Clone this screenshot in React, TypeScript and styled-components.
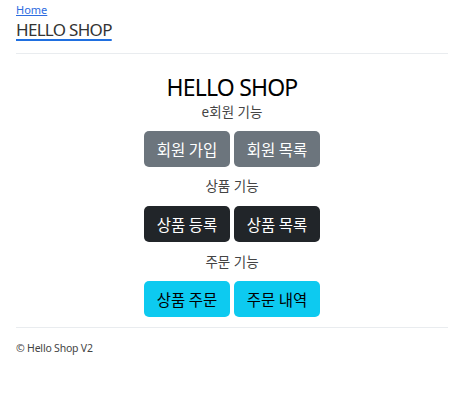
import React from "react";
import styled, { createGlobalStyle } from "styled-components";

const Global = createGlobalStyle`
  html, body { margin: 0; padding: 0; background: #fff; }
  body { font-family: "Noto Sans", "Noto Sans CJK KR", sans-serif; color: #212529; }
`;

const Page = styled.div`
  padding: 3px 26px 0 16px;
`;

const Header = styled.header`
  display: flex;
  flex-direction: column;
  align-items: flex-start;
  padding-bottom: 11px;
  border-bottom: 1px solid #e9ecef;
`;

const SmallLink = styled.a`
  font-size: 11px;
  line-height: 14px;
  color: #2d6cdf;
  text-decoration: underline;
`;

const TitleLink = styled.a`
  font-size: 17px;
  line-height: 25px;
  letter-spacing: -0.7px;
  color: #333;
  text-decoration: underline solid #1f6fe0 1.5px;
  text-underline-offset: 3px;
`;

const Main = styled.main`
  display: flex;
  flex-direction: column;
  align-items: center;
  padding-top: 18px;
  padding-bottom: 10px;
  border-bottom: 1px solid #e9ecef;
`;

const H1 = styled.h1`
  margin: 0;
  font-size: 23px;
  font-weight: 400;
  line-height: 30px;
  letter-spacing: -0.8px;
  color: #000;
`;

const Section = styled.p<{ $top: number }>`
  margin: ${(p) => p.$top}px 0 0;
  font-family: "Noto Sans", "Noto Sans CJK KR", sans-serif;
  font-size: 13.5px;
  line-height: 20px;
  color: #444;
`;

const Row = styled.div<{ $top: number }>`
  display: flex;
  gap: 4px;
  margin-top: ${(p) => p.$top}px;
`;

const variants = {
  secondary: { bg: "#6c757d", fg: "#fff" },
  dark: { bg: "#212529", fg: "#fff" },
  info: { bg: "#0dcaf0", fg: "#000" },
};

const Btn = styled.button<{ $v: keyof typeof variants }>`
  width: 86px;
  height: 36px;
  border: none;
  border-radius: 5px;
  background: ${(p) => variants[p.$v].bg};
  color: ${(p) => variants[p.$v].fg};
  font-family: "Noto Sans CJK KR", sans-serif;
  font-size: 15.5px;
  padding: 0;
  display: flex;
  align-items: center;
  justify-content: center;
`;

const Footer = styled.footer`
  padding-top: 12px;
  font-size: 10.5px;
  line-height: 16px;
  letter-spacing: -0.2px;
  color: #444;
`;

export default function App() {
  return (
    <>
      <Global />
      <Page>
        <Header>
          <SmallLink href="#">Home</SmallLink>
          <TitleLink href="#">HELLO SHOP</TitleLink>
        </Header>
        <Main>
          <H1>HELLO SHOP</H1>
          <Section $top={0}>e회원 기능</Section>
          <Row $top={9}>
            <Btn $v="secondary">회원 가입</Btn>
            <Btn $v="secondary">회원 목록</Btn>
          </Row>
          <Section $top={9}>상품 기능</Section>
          <Row $top={10}>
            <Btn $v="dark">상품 등록</Btn>
            <Btn $v="dark">상품 목록</Btn>
          </Row>
          <Section $top={10}>주문 기능</Section>
          <Row $top={9}>
            <Btn $v="info">상품 주문</Btn>
            <Btn $v="info">주문 내역</Btn>
          </Row>
        </Main>
        <Footer>© Hello Shop V2</Footer>
      </Page>
    </>
  );
}
